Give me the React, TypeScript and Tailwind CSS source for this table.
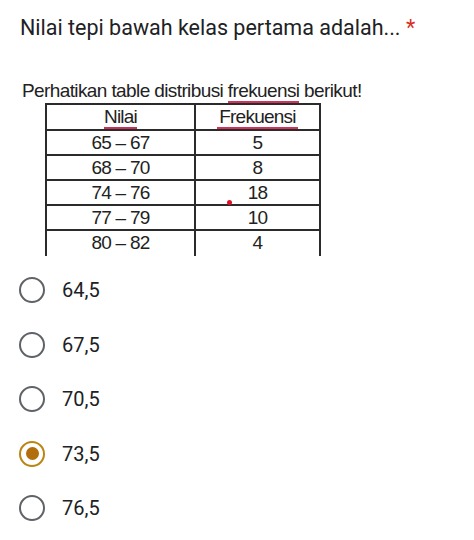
import React from "react";

const rows = [
  ["65 – 67", "5"],
  ["68 – 70", "8"],
  ["74 – 76", "18"],
  ["77 – 79", "10"],
  ["80 – 82", "4"],
];

const options = ["64,5", "67,5", "70,5", "73,5", "76,5"];

export default function App() {
  return (
    <div className="w-[474px] h-[540px] bg-white overflow-hidden font-['Roboto',sans-serif] text-[#202124]">
      <div className="pl-5 pt-[14px] text-[21.5px] leading-[28px]">
        Nilai tepi bawah kelas pertama adalah... <span className="text-[#d93025]">*</span>
      </div>

      {/* picture of the table */}
      <div className="mt-[38px] pl-[22px] font-['Liberation_Sans',Arial,sans-serif] text-[#222]">
        <div className="text-[19px] leading-[22px] tracking-[-0.032em] whitespace-nowrap">
          Perhatikan table distribusi{" "}
          <span className="border-b-2 border-[#d0345a]">frekuensi</span> berikut!
        </div>
        <div className="relative ml-[23px] mt-[1px] w-[276px] border-x-2 border-t-2 border-[#2b2b2b] text-[19px] tracking-[-0.04em]">
          <div className="grid grid-cols-[149px_1fr] h-[26px] border-b-2 border-[#2b2b2b] leading-[24px] text-center">
            <div className="border-r-2 border-[#2b2b2b]">
              <span className="border-b-2 border-[#c8325a]">Nilai</span>
            </div>
            <div>
              <span className="border-b-2 border-[#d0345a] px-[2px]">Frekuensi</span>
            </div>
          </div>
          {rows.map(([a, b], i) => (
            <div
              key={a}
              className={
                i < rows.length - 1
                  ? "grid grid-cols-[149px_1fr] h-[25px] border-b-2 border-[#2b2b2b] leading-[23px] text-center"
                  : "grid grid-cols-[149px_1fr] h-[25px] leading-[23px] text-center"
              }
            >
              <div className="border-r-2 border-[#2b2b2b]">{a}</div>
              <div>{b}</div>
            </div>
          ))}
          <div className="absolute left-[180px] top-[95px] w-[5px] h-[5px] rounded-full bg-[#e0102a]" />
        </div>
      </div>

      <div className="mt-[7px] flex flex-col">
        {options.map((o) => {
          const sel = o === "73,5";
          return (
            <div key={o} className="flex items-center h-[54.5px] pl-[19px]">
              {sel ? (
                <div className="w-[26px] h-[26px] rounded-full border-[2.5px] border-[#bb8514] flex items-center justify-center">
                  <div className="w-[13px] h-[13px] rounded-full bg-[#b06e0c]" />
                </div>
              ) : (
                <div className="w-[26px] h-[26px] rounded-full border-[2.5px] border-[#5f6368]" />
              )}
              <span className="ml-[17px] text-[20px]">{o}</span>
            </div>
          );
        })}
      </div>
    </div>
  );
}
